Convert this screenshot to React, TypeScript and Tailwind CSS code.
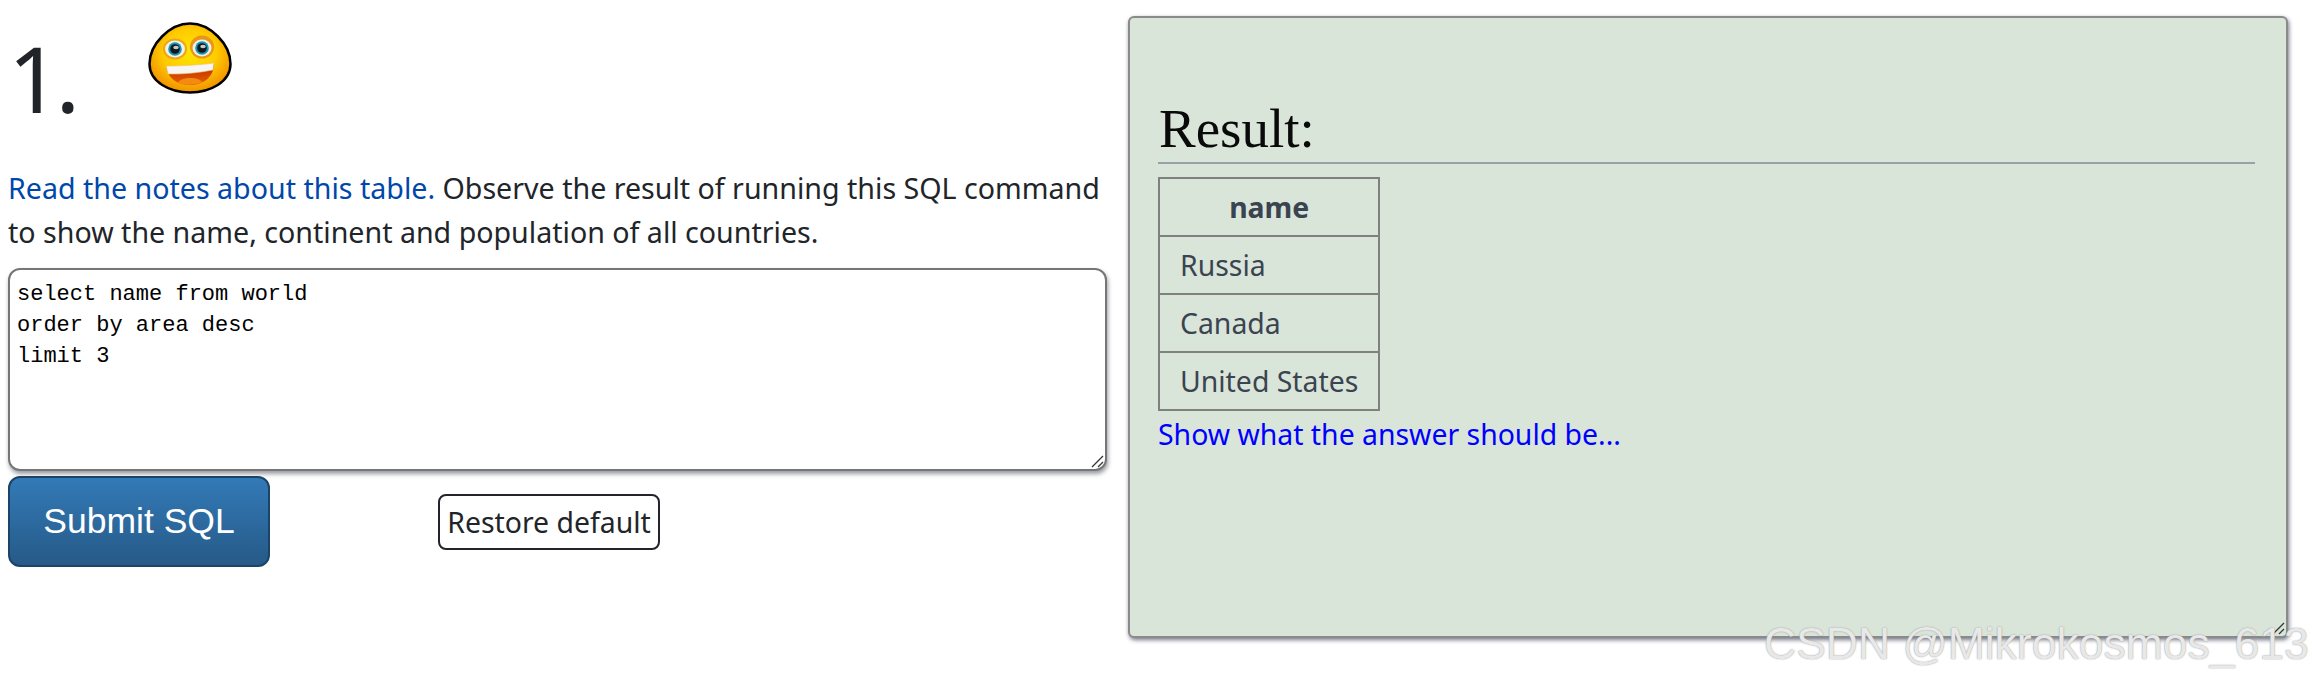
const sans = "font-['Noto_Sans','Open_Sans',sans-serif]";

function Smiley() {
  return (
    <svg width="84" height="72" viewBox="0 0 84 72" className="shrink-0">
      <defs>
        <radialGradient id="face" cx="50%" cy="42%" r="60%">
          <stop offset="0%" stopColor="#ffe600" />
          <stop offset="55%" stopColor="#ffcb00" />
          <stop offset="100%" stopColor="#f08c00" />
        </radialGradient>
        <linearGradient id="mouth" x1="0" y1="0" x2="0" y2="1">
          <stop offset="0%" stopColor="#b92a00" />
          <stop offset="100%" stopColor="#e85f00" />
        </linearGradient>
      </defs>
      <path
        d="M42 1.5C62 1.5 82.5 22 82.5 42C82.5 60 62 70.5 42 70.5C22 70.5 1.5 60 1.5 42C1.5 22 22 1.5 42 1.5Z"
        fill="url(#face)"
        stroke="#000"
        strokeWidth="2.5"
      />
      <ellipse cx="27" cy="27" rx="12" ry="10.5" fill="#eda51c" />
      <ellipse cx="54" cy="25" rx="12" ry="11.5" fill="#e8951a" />
      <ellipse cx="27" cy="27" rx="10" ry="8.5" fill="#f4f0e6" />
      <ellipse cx="54" cy="26" rx="9.5" ry="8.5" fill="#f4f0e6" />
      <circle cx="27" cy="27" r="6.8" fill="#1296b8" />
      <circle cx="54" cy="26" r="6.8" fill="#1296b8" />
      <circle cx="27" cy="27" r="4.8" fill="#10181c" />
      <circle cx="54" cy="26" r="4.8" fill="#10181c" />
      <ellipse cx="28" cy="25.5" rx="2.8" ry="1.8" fill="#c9c9c9" />
      <ellipse cx="55" cy="24.5" rx="2.8" ry="1.8" fill="#c9c9c9" />
      <path d="M18 45C34 45 52 44 66 42C66 55 55 63 42 63C29 63 20 56 18 45Z" fill="url(#mouth)" />
      <path d="M30 61C32 55 50 54 54 60C48 63 38 64 30 61Z" fill="#f58a10" />
      <path d="M18 44C34 44 52 43 66 41L65 48C50 51 34 52.5 20 52Z" fill="#f8f6f5" stroke="#f0c060" strokeWidth="0.6" />
    </svg>
  );
}

function Grip({ className }: { className: string }) {
  return (
    <svg width="14" height="14" viewBox="0 0 14 14" className={className}>
      <path d="M2 13L13 2M8 13L13 8" stroke="#333" strokeWidth="1.3" fill="none" />
    </svg>
  );
}

const countries = ["Russia", "Canada", "United States"];

export default function App() {
  return (
    <div className={`relative flex h-[682px] w-[2312px] items-start overflow-hidden bg-white ${sans} text-[#212529]`}>
      {/* Question column */}
      <div className="ml-2 w-[1100px] shrink-0">
        <div className="flex h-[132px] items-start">
          <h1 className="mt-[24px] w-[140px] text-[92px] leading-[108px] font-normal tracking-[-5px]">1.</h1>
          <div className="mt-[22px]">
            <Smiley />
          </div>
        </div>
        <p className="mt-[34px] text-[28.6px] leading-[44px]">
          <a className="text-[#0047ab]">Read the notes about this table.</a> Observe the result of running this SQL
          command to show the name, continent and population of all countries.
        </p>
        <div className="relative mt-[14px] w-[1099px]">
          <textarea
            readOnly
            className="block h-[203px] w-[1099px] resize-none rounded-[12px] border-2 border-[#767676] bg-white px-[7px] py-[9px] font-['Liberation_Mono',monospace] text-[22px] leading-[31px] text-black shadow-[1px_3px_4px_rgba(70,75,90,0.55)] outline-none"
            defaultValue={"select name from world\norder by area desc\nlimit 3"}
          />
          <Grip className="absolute right-[3px] bottom-[3px]" />
        </div>
        <div className="mt-[5px] flex items-start">
          <button className="h-[91px] w-[262px] rounded-[12px] border-2 border-[#1b4468] bg-gradient-to-b from-[#337ab7] to-[#265a88] font-['Liberation_Sans',sans-serif] text-[35.5px] text-white">
            Submit SQL
          </button>
          <button className="mt-[18px] ml-[168px] h-[56px] w-[222px] rounded-[8px] border-2 border-[#212529] bg-white pt-[1px] text-[28.4px]">
            Restore default
          </button>
        </div>
      </div>

      {/* Result panel */}
      <div className="relative mt-[16px] ml-[20px] h-[622px] w-[1160px] shrink-0 rounded-[6px] border-2 border-[#8a8a8a] bg-[#dae5da] pr-[31px] pl-[28px] shadow-[1px_2px_4px_rgba(60,65,85,0.7)]">
        <h2 className="mt-[80px] border-b-2 border-[#9a9fa8] pb-[2px] pl-[1px] font-['Liberation_Serif',serif] text-[55px] leading-[62px] text-[#0a0a0a]">
          Result:
        </h2>
        <table className="mt-[13px] w-[220px] border-collapse border-2 border-[#808080] text-[28.4px] text-[#3a4450]">
          <thead>
            <tr className="h-[58px]">
              <th className="border-2 border-[#808080] px-5 py-0 text-center font-bold">name</th>
            </tr>
          </thead>
          <tbody>
            {countries.map((c) => (
              <tr key={c} className="h-[58px]">
                <td className="border-2 border-[#808080] px-5 py-0 whitespace-nowrap">{c}</td>
              </tr>
            ))}
          </tbody>
        </table>
        <a className="mt-[1px] block text-[28.4px] leading-[44px] text-[#0000ff]">Show what the answer should be...</a>
        <Grip className="absolute right-[1px] bottom-[1px]" />
      </div>

      {/* CSDN watermark */}
      <span className="absolute top-[616px] left-[1764px] font-['Liberation_Sans',sans-serif] text-[44.5px] leading-[56px] whitespace-nowrap text-[#e8e8e8] [text-shadow:0_0_1.5px_#8a8a8a]">
        CSDN @Mikrokosmos_613
      </span>
    </div>
  );
}
